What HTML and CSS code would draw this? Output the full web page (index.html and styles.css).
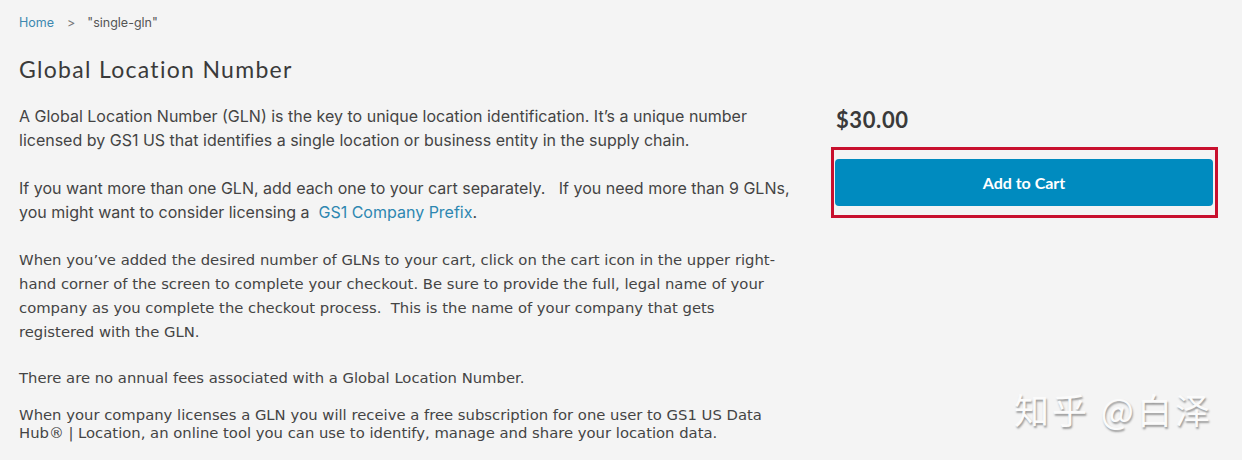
FILE: index.html
```html
<!DOCTYPE html>
<html lang="en">
<head>
<meta charset="utf-8">
<title>Global Location Number</title>
<link rel="stylesheet" href="styles.css">
</head>
<body>
<div class="page">
  <nav class="crumbs">
    <a class="crumb-link" href="#">Home</a>
    <span class="crumb-sep">&gt;</span>
    <span class="crumb-current">"single-gln"</span>
  </nav>
  <h1 class="title">Global Location Number</h1>
  <div class="content">
    <div class="desc">
      <p class="p-inter">A Global Location Number (GLN) is the key to unique location identification. It’s a unique number licensed by GS1 US that identifies a single location or business entity in the supply chain.</p>
      <p class="p-inter">If you want more than one GLN, add each one to your cart separately.&nbsp;&nbsp; If you need more than 9 GLNs, you might want to consider licensing a&nbsp; <a class="link" href="#">GS1 Company Prefix</a>.</p>
      <p class="p-verd">When you’ve added the desired number of GLNs to your cart, click on the cart icon in the upper right-hand corner of the screen to complete your checkout. Be sure to provide the full, legal name of your company as you complete the checkout process.&nbsp; This is the name of your company that gets registered with the GLN.</p>
      <p class="p-verd p-fees">There are no annual fees associated with a Global Location Number.</p>
      <p class="p-verd p-tight">When your company licenses a GLN you will receive a free subscription for one user to GS1 US Data Hub® | Location, an online tool you can use to identify, manage and share your location data.</p>
    </div>
    <aside class="buy">
      <div class="price">$30.00</div>
      <div class="highlight">
        <button class="cart-btn" type="button">Add to Cart</button>
      </div>
    </aside>
  </div>
</div>
<div class="watermark">知乎 @白泽</div>
</body>
</html>
```
FILE: styles.css
```css
html, body {
  margin: 0;
  padding: 0;
  background: #f4f4f4;
}
body {
  width: 1242px;
  height: 460px;
  overflow: hidden;
  position: relative;
  color: #444;
}
.page {
  padding: 14px 19px 0 19px;
}
.crumbs {
  font-family: Inter, "Liberation Sans", sans-serif;
  font-size: 12.5px;
  line-height: 18px;
  color: #555;
  display: flex;
  align-items: center;
}
.crumb-link {
  color: #3d88b0;
  text-decoration: none;
}
.crumb-sep {
  margin: 0 12px 0 13px;
  color: #777;
}
.title {
  font-family: Lato, "Open Sans", sans-serif;
  font-weight: 400;
  font-size: 23px;
  line-height: 30px;
  color: #3a3a3a;
  margin: 22px 0 0 0;
  letter-spacing: 1.3px;
}
.content {
  display: flex;
  margin-top: 20px;
}
.desc {
  width: 773px;
  flex: none;
}
.desc p {
  margin: 0;
}
.p-inter {
  font-family: Inter, "Liberation Sans", sans-serif;
  font-size: 16px;
  line-height: 24px;
  color: #444;
  margin-bottom: 24px !important;
}
.p-verd {
  font-family: "DejaVu Sans", Verdana, sans-serif;
  font-size: 14.8px;
  line-height: 24px;
  color: #444;
}
.p-fees {
  margin-top: 22px !important;
}
.p-tight {
  line-height: 18px;
  margin-top: 16px !important;
}
.link {
  color: #2d87b1;
  text-decoration: none;
}
.buy {
  margin-left: 39px;
  width: 387px;
  flex: none;
  padding-top: 3px;
}
.price {
  font-family: Lato, "Open Sans", sans-serif;
  font-weight: 700;
  font-size: 22px;
  line-height: 26px;
  letter-spacing: 0.6px;
  color: #3a3a3a;
  padding-left: 5px;
}
.highlight {
  margin-top: 14px;
  border: 3px solid #c8102e;
  padding: 9px 2px 9px 1px;
}
.cart-btn {
  display: block;
  width: 100%;
  height: 47px;
  border: none;
  border-radius: 4px;
  background: #008bbf;
  color: #fff;
  font-family: Lato, "Open Sans", sans-serif;
  font-weight: 700;
  font-size: 16px;
  padding: 0;
  cursor: pointer;
}
.watermark {
  position: absolute;
  left: 1014px;
  top: 386px;
  font-family: "Noto Sans CJK SC", sans-serif;
  font-size: 35px;
  line-height: 46px;
  color: #fbfbfb;
  text-shadow: 1px 2px 2px #9a9a9a;
  letter-spacing: 3px;
}
```
